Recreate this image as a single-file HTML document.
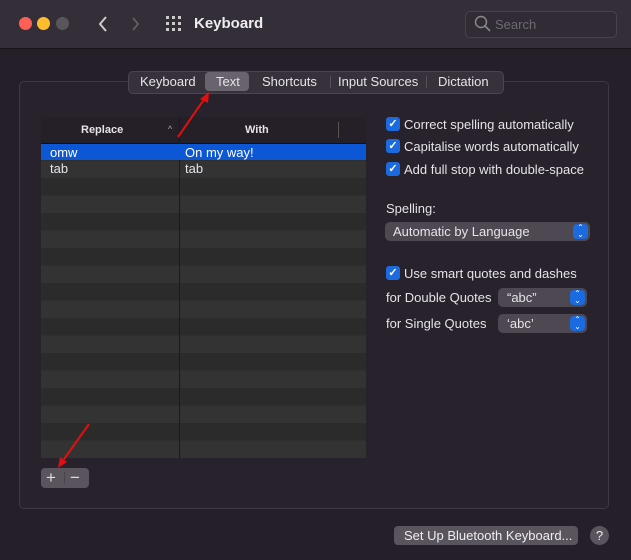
<!DOCTYPE html><html><head><style>
body{margin:0;width:631px;height:560px;background:#241f29;font-family:"Liberation Sans",sans-serif;color:#e6e3e8;position:relative;overflow:hidden;font-size:13px}
.a{position:absolute}
.tb{left:0;top:0;width:631px;height:48px;background:#332e37;border-bottom:1px solid #17131a}
.dot{width:13px;height:13px;border-radius:50%;top:17px}
.panel{left:19px;top:81px;width:588px;height:426px;border:1px solid #3e3943;border-radius:5px;background:#27222c}
.tabs{left:128px;top:71px;width:374px;height:21px;background:#36313b;border:1px solid #4a454f;border-radius:5px}
.tab{top:74px;font-size:13px}
.table{left:41px;top:117px;width:325px;height:341px;background:#2a2a2a}
.hd{left:41px;top:117px;width:325px;height:26px;background:#252027;border-bottom:1px solid #111}
.cb{width:14px;height:14px;background:#1c6ae0;border-radius:3px;color:#fff;font-size:11px;line-height:14px;text-align:center;font-weight:bold}
.pop{background:#4d4852;border-radius:5px;height:19px}
.arr{width:15px;height:15px;background:#1c6ae0;border-radius:4px;top:2px;right:2px;color:#fff;font-size:8px;line-height:7px;text-align:center}
</style></head><body>
<div class="a tb"></div>
<div class="a dot" style="left:19px;background:#fe5f57"></div>
<div class="a dot" style="left:37px;background:#febc2e"></div>
<div class="a dot" style="left:56px;background:#59555d"></div>
<svg class="a" style="left:96px;top:15px" width="50" height="18"><path d="M10 2 L4 9 L10 16" stroke="#ccc" stroke-width="2" fill="none"/><path d="M37 3 L42 9 L37 15" stroke="#666" stroke-width="1.6" fill="none"/></svg>
<svg class="a" style="left:166px;top:16px" width="18" height="16"><g fill="#ccc"><rect x="0" y="0" width="3" height="3"/><rect x="6" y="0" width="3" height="3"/><rect x="12" y="0" width="3" height="3"/><rect x="0" y="6" width="3" height="3"/><rect x="6" y="6" width="3" height="3"/><rect x="12" y="6" width="3" height="3"/><rect x="0" y="12" width="3" height="3"/><rect x="6" y="12" width="3" height="3"/><rect x="12" y="12" width="3" height="3"/></g></svg>
<div class="a" style="left:194px;top:15px;font-size:15px;font-weight:bold;color:#eee">Keyboard</div>
<div class="a" style="left:465px;top:11px;width:150px;height:25px;border:1px solid #47424c;border-radius:5px;background:#302b34"></div>
<svg class="a" style="left:474px;top:15px" width="18" height="18"><circle cx="7" cy="7" r="5.5" stroke="#888" stroke-width="1.5" fill="none"/><path d="M11 11 L16 16" stroke="#888" stroke-width="1.6"/></svg>
<div class="a" style="left:495px;top:17px;color:#6e6a72">Search</div>
<div class="a panel"></div>
<div class="a tabs"></div>
<div class="a" style="left:205px;top:72px;width:44px;height:19px;background:#68636c;border-radius:4px"></div>
<div class="a tab" style="left:140px">Keyboard</div>
<div class="a tab" style="left:216px">Text</div>
<div class="a tab" style="left:262px">Shortcuts</div>
<div class="a tab" style="left:338px">Input Sources</div>
<div class="a tab" style="left:438px">Dictation</div>
<div class="a" style="left:330px;top:76px;width:1px;height:12px;background:#55505a"></div>
<div class="a" style="left:426px;top:76px;width:1px;height:12px;background:#55505a"></div>
<div class="a table" style="background:repeating-linear-gradient(#2b2b2b 0 17.5px,#333 17.5px 35px);background-position:0 26px"></div>
<div class="a hd"></div>
<div class="a" style="left:81px;top:124px;font-size:11px;font-weight:bold">Replace</div>
<div class="a" style="left:168px;top:124px;font-size:9px;color:#aaa">^</div>
<div class="a" style="left:245px;top:124px;font-size:11px;font-weight:bold">With</div>
<div class="a" style="left:338px;top:122px;width:1px;height:16px;background:#555"></div>
<div class="a" style="left:41px;top:144px;width:325px;height:16px;background:#0b57d6"></div>
<div class="a" style="left:179px;top:117px;width:1px;height:341px;background:#1a1a1a"></div>
<div class="a" style="left:179px;top:144px;width:1px;height:16px;background:#0b57d6"></div>
<div class="a" style="left:50px;top:145px;color:#fff">omw</div>
<div class="a" style="left:185px;top:145px;color:#fff">On my way!</div>
<div class="a" style="left:50px;top:161px">tab</div>
<div class="a" style="left:185px;top:161px">tab</div>
<div class="a" style="left:41px;top:468px;width:48px;height:20px;background:#59545e;border-radius:4px"></div>
<div class="a" style="left:64px;top:472px;width:1px;height:12px;background:#48434c"></div>
<div class="a" style="left:46px;top:468px;font-size:17px;color:#ddd">+</div>
<div class="a" style="left:70px;top:468px;font-size:17px;color:#ddd">−</div>
<div class="a cb" style="left:386px;top:117px">✓</div>
<div class="a" style="left:404px;top:117px">Correct spelling automatically</div>
<div class="a cb" style="left:386px;top:139px">✓</div>
<div class="a" style="left:404px;top:139px">Capitalise words automatically</div>
<div class="a cb" style="left:386px;top:162px">✓</div>
<div class="a" style="left:404px;top:162px">Add full stop with double-space</div>
<div class="a" style="left:386px;top:201px">Spelling:</div>
<div class="a pop" style="left:385px;top:222px;width:205px"><span class="a" style="left:8px;top:2px">Automatic by Language</span><div class="a arr">⌃<br>⌄</div></div>
<div class="a cb" style="left:386px;top:266px">✓</div>
<div class="a" style="left:404px;top:266px">Use smart quotes and dashes</div>
<div class="a" style="left:386px;top:290px">for Double Quotes</div>
<div class="a pop" style="left:498px;top:288px;width:89px"><span class="a" style="left:9px;top:2px">“abc”</span><div class="a arr">⌃<br>⌄</div></div>
<div class="a" style="left:386px;top:316px">for Single Quotes</div>
<div class="a pop" style="left:498px;top:314px;width:89px"><span class="a" style="left:9px;top:2px">‘abc’</span><div class="a arr">⌃<br>⌄</div></div>
<div class="a" style="left:394px;top:526px;width:184px;height:19px;background:#59545e;border-radius:4px"><span class="a" style="left:10px;top:2px;color:#eee">Set Up Bluetooth Keyboard...</span></div>
<div class="a" style="left:590px;top:526px;width:19px;height:19px;border-radius:50%;background:#59545e;color:#eee;text-align:center;line-height:19px;font-size:13px">?</div>
<svg class="a" style="left:0;top:0" width="631" height="560"><g stroke="#e01010" stroke-width="2" fill="#e01010"><line x1="178" y1="137" x2="205" y2="98"/><polygon points="209,92 200,99 208,103" stroke="none"/><line x1="89" y1="424" x2="62" y2="462"/><polygon points="58,468 60,457 67,462" stroke="none"/></g></svg>
</body></html>
